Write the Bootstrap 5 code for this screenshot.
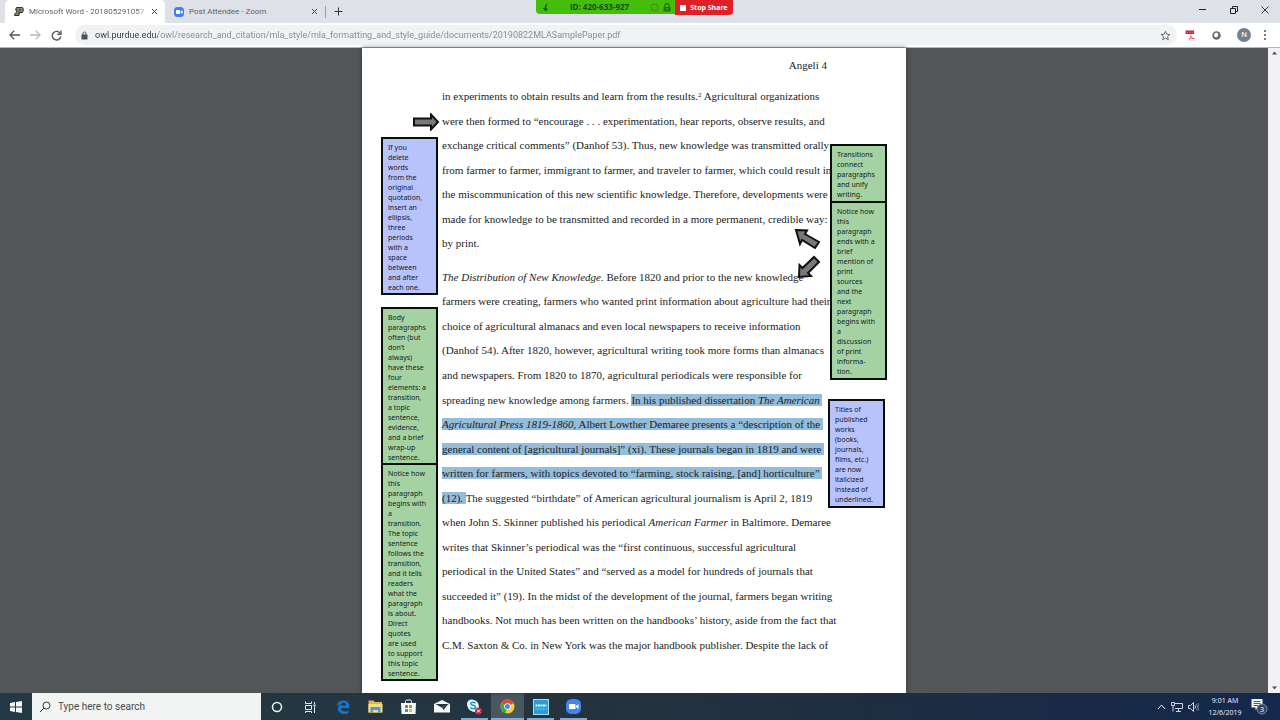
<!DOCTYPE html>
<html lang="en">
<head>
<meta charset="utf-8">
<meta name="viewport" content="width=device-width, initial-scale=1">
<title>MLA Sample Paper</title>
<link href="https://cdn.jsdelivr.net/npm/bootstrap@5.3.0/dist/css/bootstrap.min.css" rel="stylesheet">
<style>
  body { font-family: Roboto, "Open Sans", sans-serif; font-size: 8px; line-height: 12px; color: #5f6368; }
  svg { display: block; flex: none; }
  button { border: 0; background: none; padding: 0; color: inherit; display: flex; align-items: center; justify-content: center; }

  /* browser window */
  .tab-strip { background: #dee1e7; height: 23px; padding-left: 5px; }
  .tab-item { width: 160px; padding: 0 6px 0 9px; }
  .tab-item.is-active { background: #fff; border-radius: 5px 5px 0 0; }
  .tab-item a { color: #5f6368; text-decoration: none; white-space: nowrap; flex: 1; padding-left: 5px; }
  .tab-item.is-active a { -webkit-mask-image: linear-gradient(90deg, #000 90%, transparent); mask-image: linear-gradient(90deg, #000 90%, transparent); }
  .tab-item button { width: 10px; height: 12px; color: #3c4043; }
  .tab-divider { width: 1px; height: 12px; background: #9a9da2; }
  .win-btn { width: 31px; height: 19px; color: #222; }
  .toolbar { background: #fff; height: 25px; border-bottom: 1px solid #b5b7bb; }
  .nav-btn { width: 21px; height: 22px; color: #55585c; }
  .address { background: #f1f2f5; height: 20px; border-radius: 10px; padding: 0 6px 0 6px; }
  .address input { border: 0; outline: 0; padding: 0; margin-left: 7px; font-size: 9px; line-height: 14px; height: 16px;
    color: transparent; background: linear-gradient(90deg, #33363a 63px, #85888c 63px); -webkit-background-clip: text; background-clip: text; }
  .avatar { width: 14px; height: 14px; border-radius: 50%; background: #74828f; color: #fff; }
  .menu-btn { margin: 0 13px 0 12px; }

  .share-layer { padding-right: 11px; pointer-events: none; }
  .share-id { background: #45bd0d; color: #14500c; width: 139px; height: 14px; border-radius: 0 0 0 4px; padding: 0 4px 0 6px; font: 700 8px/14px "Open Sans", sans-serif; }
  .share-stop { background: #df2027; color: #fff; width: 58px; height: 15px; border-radius: 0 0 4px 0; gap: 4px; font: 700 7px/14px "Open Sans", sans-serif; }

  /* PDF viewer */
  .viewer { background: #525659; min-height: 0; }
  .scroll-track { width: 12px; background: #f1f1f3; padding: 3px 0; color: #505050; }
  .paper { width: 544px; background: #fff; padding: 0 19px; box-shadow: 0 0 4px #333; color: #1c1c1c; }
  .margin-left-col, .margin-right-col { width: 57px; font: 7px/10px "Noto Sans", "DejaVu Sans", sans-serif; color: #15201c; }
  .margin-left-col { padding-top: 89px; gap: 12px; }
  .margin-right-col { padding-top: 96px; gap: 19px; margin-left: -2px; }
  .margin-right-col .note { padding-bottom: 1px; }
  .margin-right-col .note-blue { margin: 0 2px 0 -2px; }
  .note { border: 2px solid #0b0f0c; padding: 4px 0 0 5px; white-space: nowrap; }
  .note + .note { border-top: 0; }
  .note-blue { background: #b8c2fb; }
  .note-green { background: #a5d2a2; }
  .manuscript { font: 11px/14px "Liberation Serif", serif; padding: 0 2px 36px 4px; position: relative; z-index: 1; min-width: 0; }
  .running-head { height: 36px; padding: 10px 3px 0 0; text-align: right; }
  .manuscript p { display: grid; grid-auto-rows: 1fr; align-items: center; margin: 0; white-space: nowrap; }
  .manuscript sup { font-size: 7px; line-height: 0; }
  .para-a { flex: 7 1 0; }
  .para-b { flex: 16 1 0; margin-top: 9px !important; }
  .hl { background: #94bddb; }
  .arrow { position: absolute; }
  .arrow path { fill: #77797b; stroke: #111; stroke-width: 2; }
  .arrow-ellipsis { left: 51px; top: 65px; }
  .arrow-up { left: 432px; top: 179px; }
  .arrow-down { left: 435px; top: 207px; }

  /* taskbar */
  .taskbar { height: 27px; background: linear-gradient(90deg, #223a45, #24343e 45%, #1d2d42 70%, #14284c); color: #e8eef2; }
  .start-btn { width: 32px; }
  .search-box { width: 229px; background: #f2f3f3; color: #333; padding-left: 7px; gap: 7px; margin-right: -1px; }
  .search-box input { border: 0; outline: 0; background: none; padding: 0; font-size: 10px; line-height: 14px; width: 180px; }
  .search-box input::placeholder { color: #4b4b4b; opacity: 1; }
  .task-btn { width: 33px; padding: 0 3px; }
  .task-btn.is-open { box-shadow: inset 0 -2px #7cabdf; margin: 0 3px; width: 27px; padding: 0; }
  .task-btn.is-front { box-shadow: inset 0 -2px #7cabdf; background: #4b575f; }
  .clock { font: 7px/12px "Open Sans", sans-serif; color: #f2f4f8; width: 42px; }
  .tray { gap: 5px; padding-right: 12px; }
</style>
</head>
<body class="vh-100 d-flex flex-column overflow-hidden">

<header>
  <div class="tab-strip d-flex align-items-end justify-content-between">
    <nav class="d-flex align-items-center h-100" aria-label="Tabs">
      <div class="tab-item is-active d-flex align-items-center h-100">
        <svg width="10" height="9" viewBox="0 0 20 18"><path d="M5 1h12l2 4-2 6h-7l-1 2h2l-1 4H1l1-4h2l2-7H3z" fill="#8f8668" stroke="#33352f" stroke-width="2"/><path d="M10 5h4l-1 2H9z" fill="#222"/></svg>
        <a href="#">Microsoft Word - 201805291057</a>
        <button type="button" aria-label="Close tab"><svg width="7" height="7" viewBox="0 0 7 7" stroke="currentColor"><path d="M1 1l5 5M6 1L1 6"/></svg></button>
      </div>
      <div class="tab-item d-flex align-items-center h-100">
        <svg width="10" height="10" viewBox="0 0 20 20"><rect width="20" height="20" rx="7" fill="#3b82f0"/><path d="M4 6h8v8H6a2 2 0 0 1-2-2zM13 9l4-3v8l-4-3z" fill="#fff"/></svg>
        <a href="#">Post Attendee - Zoom</a>
        <button type="button" aria-label="Close tab"><svg width="7" height="7" viewBox="0 0 7 7" stroke="currentColor"><path d="M1 1l5 5M6 1L1 6"/></svg></button>
      </div>
      <span class="tab-divider"></span>
      <button type="button" class="ms-1 p-1" aria-label="New tab"><svg width="9" height="9" viewBox="0 0 9 9" stroke="#333" stroke-width="1"><path d="M4.500 .5v8M.5 4.500h8"/></svg></button>
    </nav>
    <div class="d-flex align-self-start">
      <button type="button" class="win-btn" aria-label="Minimize"><svg width="7" height="7" viewBox="0 0 7 7" stroke="currentColor"><path d="M0 3.500h7"/></svg></button>
      <button type="button" class="win-btn" aria-label="Restore"><svg width="8" height="8" viewBox="0 0 8 8" fill="none" stroke="currentColor"><path d="M.5 2.500h5v5h-5zM2.500 2v-1.500h5v5H6"/></svg></button>
      <button type="button" class="win-btn" aria-label="Close"><svg width="8" height="8" viewBox="0 0 8 8" stroke="currentColor" stroke-width=".9"><path d="M.5 .5l7 7M7.500 .5l-7 7"/></svg></button>
    </div>
  </div>

  <div class="toolbar d-flex align-items-center">
    <div class="d-flex ps-1">
      <button type="button" class="nav-btn" aria-label="Back"><svg width="11" height="10" viewBox="0 0 11 10" fill="none" stroke="currentColor" stroke-width="1.300"><path d="M11 5H1M5.200 .8L1 5l4.200 4.200"/></svg></button>
      <button type="button" class="nav-btn" aria-label="Forward"><svg width="11" height="10" viewBox="0 0 11 10" fill="none" stroke="#b9bbbf" stroke-width="1.300"><path d="M0 5h10M5.800 .8L10 5 5.800 9.200"/></svg></button>
      <button type="button" class="nav-btn" aria-label="Reload"><svg width="11" height="11" viewBox="0 0 11 11" fill="none" stroke="currentColor" stroke-width="1.400"><path d="M9.300 3.500A4.300 4.300 0 1 0 9.800 6.500"/><path d="M10 .5v3.800H6.200" /></svg></button>
    </div>
    <form class="address d-flex align-items-center flex-grow-1 ms-2">
      <svg width="7" height="9" viewBox="0 0 14 18"><rect x="1" y="7" width="12" height="10" rx="1" fill="#4d5054"/><path d="M4 8V5a3 3 0 0 1 6 0v3" fill="none" stroke="#4d5054" stroke-width="2"/></svg>
      <input class="flex-grow-1" type="text" aria-label="Address" value="owl.purdue.edu/owl/research_and_citation/mla_style/mla_formatting_and_style_guide/documents/20190822MLASamplePaper.pdf">
      <button type="button" aria-label="Bookmark this page"><svg width="11" height="11" viewBox="0 0 22 22" fill="none" stroke="#55585c" stroke-width="1.800"><path d="M11 2.500l2.600 5.900 6.300.6-4.800 4.200 1.500 6.300-5.600-3.400-5.600 3.400 1.500-6.300-4.800-4.200 6.300-.6z"/></svg></button>
    </form>
    <div class="d-flex align-items-center ms-2">
      <button type="button" aria-label="PDF extension"><svg width="11" height="11" viewBox="0 0 22 22"><rect x="1" y="1" width="17" height="7" fill="#cf232b"/><path d="M3 4.500h13" stroke="#e57a7a" stroke-width="2" stroke-dasharray="3 2"/><path d="M12 9c1 5-1 8-4 10M11 12c2 4 5 5 8 5M8 18c3-2 7-2 11-1" fill="none" stroke="#e5484d" stroke-width="1.500"/><path d="M6 21h14" stroke="#ccc"/></svg></button>
      <button type="button" class="ms-3" aria-label="Extension"><svg width="9" height="9" viewBox="0 0 18 18"><circle cx="9" cy="9" r="8.500" fill="#6b6d70"/><path d="M5 5q4-3 7 0 1 5-2 7-5 1-6-2z" fill="#fff"/></svg></button>
      <button type="button" class="avatar ms-3" aria-label="Profile">N</button>
      <button type="button" class="menu-btn" aria-label="Menu"><svg width="4" height="10" viewBox="0 0 4 10" fill="#4d5054"><circle cx="2" cy="1" r="1"/><circle cx="2" cy="5" r="1"/><circle cx="2" cy="9" r="1"/></svg></button>
    </div>
  </div>
</header>

<div class="share-layer position-absolute top-0 start-0 end-0 d-flex justify-content-center" aria-label="Screen share">
  <div class="share-id d-flex align-items-center justify-content-between">
    <svg width="7" height="9" viewBox="0 0 14 18"><path d="M12 1C7 2 5 5 5.500 10H1l7 7 4-6H9C8 7 9 4 12 1z" fill="#116016"/></svg>
    <span>ID: 420-633-927</span>
    <span class="d-flex gap-1"><svg width="9" height="9" viewBox="0 0 9 9"><circle cx="4.500" cy="4.500" r="3.500" fill="none" stroke="#5e7a12"/></svg><svg width="8" height="9" viewBox="0 0 16 18"><path d="M4 8V5a4 4 0 0 1 8 0v3" fill="none" stroke="#23701c" stroke-width="2.500"/><path d="M1 8h14v9H1z" fill="#23701c"/><path d="M8 10v4" stroke="#58c52a" stroke-width="2"/></svg></span>
  </div>
  <button type="button" class="share-stop"><svg width="6" height="6"><rect width="6" height="6" fill="#fff"/></svg>Stop Share</button>
</div>

<main class="viewer flex-grow-1 d-flex">
  <div class="flex-grow-1 d-flex justify-content-center">
    <article class="paper position-relative d-flex">
      <aside class="margin-left-col d-flex flex-column flex-shrink-0">
        <div class="note note-blue">If you<br>delete<br>words<br>from the<br>original<br>quotation,<br>insert an<br>ellipsis,<br>three<br>periods<br>with a<br>space<br>between<br>and after<br>each one.</div>
        <div>
          <div class="note note-green">Body<br>paragraphs<br>often (but<br>don’t<br>always)<br>have these<br>four<br>elements: a<br>transition,<br>a topic<br>sentence,<br>evidence,<br>and a brief<br>wrap-up<br>sentence.</div>
          <div class="note note-green">Notice how<br>this<br>paragraph<br>begins with<br>a<br>transition.<br>The topic<br>sentence<br>follows the<br>transition,<br>and it tells<br>readers<br>what the<br>paragraph<br>is about.<br>Direct<br>quotes<br>are used<br>to support<br>this topic<br>sentence.</div>
        </div>
      </aside>

      <section class="manuscript flex-grow-1 d-flex flex-column">
        <div class="running-head">Angeli 4</div>
        <p class="para-a">
          <span>in experiments to obtain results and learn from the results.<sup>2</sup> Agricultural organizations</span>
          <span>were then formed to “encourage . . . experimentation, hear reports, observe results, and</span>
          <span>exchange critical comments” (Danhof 53). Thus, new knowledge was transmitted orally</span>
          <span>from farmer to farmer, immigrant to farmer, and traveler to farmer, which could result in</span>
          <span>the miscommunication of this new scientific knowledge. Therefore, developments were</span>
          <span>made for knowledge to be transmitted and recorded in a more permanent, credible way:</span>
          <span>by print.</span>
        </p>
        <p class="para-b">
          <span><em>The Distribution of New Knowledge.</em> Before 1820 and prior to the new knowledge</span>
          <span>farmers were creating, farmers who wanted print information about agriculture had their</span>
          <span>choice of agricultural almanacs and even local newspapers to receive information</span>
          <span>(Danhof 54). After 1820, however, agricultural writing took more forms than almanacs</span>
          <span>and newspapers. From 1820 to 1870, agricultural periodicals were responsible for</span>
          <span>spreading new knowledge among farmers. <span class="hl">In his published dissertation <em>The American&nbsp;</em></span></span>
          <span><span class="hl"><em>Agricultural Press 1819-1860</em>, Albert Lowther Demaree presents a “description of the&nbsp;</span></span>
          <span><span class="hl">general content of [agricultural journals]” (xi). These journals began in 1819 and were&nbsp;</span></span>
          <span><span class="hl">written for farmers, with topics devoted to “farming, stock raising, [and] horticulture”&nbsp;</span></span>
          <span><span class="hl">(12). </span>The suggested “birthdate” of American agricultural journalism is April 2, 1819</span>
          <span>when John S. Skinner published his periodical <em>American Farmer</em> in Baltimore. Demaree</span>
          <span>writes that Skinner’s periodical was the “first continuous, successful agricultural</span>
          <span>periodical in the United States” and “served as a model for hundreds of journals that</span>
          <span>succeeded it” (19). In the midst of the development of the journal, farmers began writing</span>
          <span>handbooks. Not much has been written on the handbooks’ history, aside from the fact that</span>
          <span>C.M. Saxton &amp; Co. in New York was the major handbook publisher. Despite the lack of</span>
        </p>
      </section>

      <aside class="margin-right-col d-flex flex-column flex-shrink-0">
        <div>
          <div class="note note-green">Transitions<br>connect<br>paragraphs<br>and unify<br>writing.</div>
          <div class="note note-green">Notice how<br>this<br>paragraph<br>ends with a<br>brief<br>mention of<br>print<br>sources<br>and the<br>next<br>paragraph<br>begins with<br>a<br>discussion<br>of print<br>informa-<br>tion.</div>
        </div>
        <div class="note note-blue">Titles of<br>published<br>works<br>(books,<br>journals,<br>films, etc.)<br>are now<br>italicized<br>instead of<br>underlined.</div>
      </aside>

      <svg class="arrow arrow-ellipsis" width="27" height="18" viewBox="0 0 27 18"><path d="M1 5.500h17V1.500l7 7.500-7 7.500v-4H1z"/></svg>
      <svg class="arrow arrow-up" width="27" height="23" viewBox="0 0 27 23"><path d="M2 3l11 .5-2 3.500 14 8-4 6-13-8-2 4z"/></svg>
      <svg class="arrow arrow-down" width="25" height="25" viewBox="0 0 25 25"><path d="M2 22l.5-12 3 3L17 2l5 5-11 11 3 3z"/></svg>
    </article>
  </div>
  <div class="scroll-track d-flex flex-column justify-content-between align-items-center">
    <svg width="5" height="4" viewBox="0 0 5 4"><path d="M0 3.500L2.500 .5 5 3.500z" fill="currentColor"/></svg>
    <svg width="5" height="4" viewBox="0 0 5 4"><path d="M0 .5l2.500 3L5 .5z" fill="currentColor"/></svg>
  </div>
</main>

<footer class="taskbar d-flex justify-content-between">
  <div class="d-flex">
    <button type="button" class="start-btn" aria-label="Start"><svg width="12" height="12" viewBox="0 0 24 24" fill="#f4f8fa"><path d="M0 4l10-2v9H0zM12 2l12-2v11H12zM0 13h10v9L0 20zM12 13h12v11l-12-2z"/></svg></button>
    <label class="search-box d-flex align-items-center">
      <svg width="12" height="12" viewBox="0 0 12 12" fill="none" stroke="#333"><circle cx="7.500" cy="4.500" r="3.500"/><path d="M5 7L1 11"/></svg>
      <input type="search" placeholder="Type here to search" aria-label="Search">
    </label>
    <button type="button" class="task-btn" aria-label="Cortana"><svg width="12" height="12"><circle cx="6" cy="6" r="4.500" fill="none" stroke="#eef4f6" stroke-width="1.500"/></svg></button>
    <button type="button" class="task-btn" aria-label="Task View"><svg width="12" height="12" viewBox="0 0 12 12" fill="none" stroke="#e3ebee"><path d="M1.500 .5v2h6v-2M1.500 4.500h6v4h-6zM1.500 12v-1.500h6V12M10.500 1v2M10.500 6v6"/><path d="M9.500 4.500h2" stroke-width="2"/></svg></button>
    <button type="button" class="task-btn" aria-label="Edge"><svg width="14" height="14" viewBox="0 0 28 28"><path d="M1 13C2 5 8 1 14 1c8 0 13 5 13 12v3H10c0 5 4 7 8 7 3 0 5-1 7-2v5c-2 1-5 2-9 2C8 28 4 23 4 17c0-4 2-7 5-9-5 1-7 3-8 5zm9-2h10c0-4-2-6-5-6s-5 3-5 6z" fill="#1677d0"/></svg></button>
    <button type="button" class="task-btn" aria-label="File Explorer"><svg width="15" height="13" viewBox="0 0 30 26"><path d="M1 1h10l3 3h14v21H1z" fill="#e5b24a"/><path d="M1 8h28v17H1z" fill="#f8dc83"/><path d="M5 25V14h20v11h-5v-5H10v5z" fill="#4a9bd6"/></svg></button>
    <button type="button" class="task-btn" aria-label="Microsoft Store"><svg width="15" height="16" viewBox="0 0 30 32"><path d="M9 9V5q0-3 3-3h6q3 0 3 3v4" fill="none" stroke="#eee" stroke-width="2"/><path d="M0 8h30l-1 22H1z" fill="#f7f8f8"/><path fill="#e8552d" d="M8 12h6v6H8z"/><path fill="#76b82a" d="M16 12h6v6h-6z"/><path fill="#2b9be0" d="M8 20h6v6H8z"/><path fill="#f6b81a" d="M16 20h6v6h-6z"/></svg></button>
    <button type="button" class="task-btn" aria-label="Mail"><svg width="16" height="13" viewBox="0 0 32 26"><path d="M0 8L16 0l16 8v17H0z" fill="#f4f6f6"/><path d="M3 8h27l-15 7zM16 15l3 5 9-11z" fill="#25343c"/></svg></button>
    <button type="button" class="task-btn is-open" aria-label="Skype"><svg width="17" height="16" viewBox="0 0 34 32"><circle cx="11" cy="10" r="9" fill="#dff4fc"/><circle cx="17" cy="17" r="9" fill="#dff4fc"/><circle cx="14" cy="13" r="11" fill="#e8f8fd"/><path d="M19 8q-5-3-9 0c-3 5 9 4 9 8 0 5-8 4-10 1" fill="none" stroke="#169ad6" stroke-width="3"/><circle cx="25" cy="24" r="7" fill="#c9203f"/><path d="M22 21l6 6M28 21l-6 6" stroke="#fff" stroke-width="2"/></svg></button>
    <button type="button" class="task-btn is-front" aria-label="Chrome"><svg width="15" height="15" viewBox="0 0 30 30"><circle cx="15" cy="15" r="14" fill="#f9cd38"/><path d="M15 15L3 8a14 14 0 0 1 24.500 0z" fill="#de4a3b"/><path d="M15 15l-4 13.500A14 14 0 0 1 3 8z" fill="#3aa757"/><circle cx="15" cy="15" r="6.500" fill="#fff"/><circle cx="15" cy="15" r="5" fill="#4688f1"/></svg></button>
    <button type="button" class="task-btn is-open" aria-label="Dymo"><svg width="16" height="16" viewBox="0 0 32 32"><rect x="1" y="1" width="30" height="30" fill="#2a9fd3" stroke="#a9daec" stroke-width="2"/><path d="M5 13h22" stroke="#e2f4fa" stroke-width="4" stroke-dasharray="4 1"/><path d="M5 20h22" stroke="#84c9e6" stroke-width="2" stroke-dasharray="2 1"/></svg></button>
    <button type="button" class="task-btn is-open" aria-label="Zoom"><svg width="15" height="15" viewBox="0 0 30 30"><rect width="30" height="30" rx="11" fill="#4484ee"/><path d="M6 10h11q2 0 2 2v8H8q-2 0-2-2zM20 14l5-4v10l-5-4z" fill="#fff"/></svg></button>
  </div>
  <div class="tray d-flex align-items-center">
    <button type="button" aria-label="Show hidden icons"><svg width="9" height="6" viewBox="0 0 9 6" fill="none" stroke="currentColor"><path d="M1 5l3.500-4L8 5"/></svg></button>
    <button type="button" aria-label="Network"><svg width="12" height="10" viewBox="0 0 12 10" fill="none" stroke="#cfd6df"><path d="M4 1.500h7.500v5H4M.5 .5h3v3h-3zM2 3.500v6M5 9.500h5M7.500 6.500v3"/></svg></button>
    <button type="button" aria-label="Volume"><svg width="11" height="10" viewBox="0 0 11 10" fill="none" stroke="#cfd6df"><path d="M.5 3.500h2l3-3v9l-3-3h-2z"/><path d="M7 3.500q1 1.500 0 3"/><path d="M8.500 2q2 3 0 6M10 1q2 4 0 8" stroke="#6f7d92"/></svg></button>
    <div class="clock text-center"><div>9:01 AM</div><div>12/6/2019</div></div>
    <button type="button" aria-label="3 notifications"><svg width="17" height="17" viewBox="0 0 34 34"><path d="M1 2h22v17h-9l-5 5v-5H1z" fill="#f4f6f9"/><path d="M5 7h14M5 11h14M5 15h9" stroke="#16294b" stroke-width="1.500"/><circle cx="22" cy="22" r="10" fill="#33435f" stroke="#9aa5b6" stroke-width="1.500"/><text x="22" y="27" text-anchor="middle" font-size="14" fill="#fff" font-family="Open Sans">3</text></svg></button>
  </div>
</footer>

<script src="https://cdn.jsdelivr.net/npm/bootstrap@5.3.0/dist/js/bootstrap.bundle.min.js"></script>
</body>
</html>
